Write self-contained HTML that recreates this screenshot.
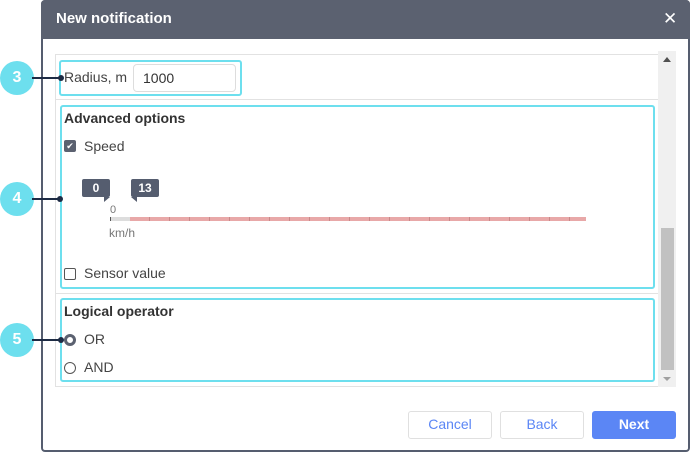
<!DOCTYPE html>
<html><head><style>
*{box-sizing:border-box;margin:0;padding:0}
body{width:690px;height:452px;background:#fff;font-family:"Liberation Sans",sans-serif;position:relative;overflow:hidden;color:#333}
.a{position:absolute}
.dlg{left:41px;top:0;width:649px;height:452px;border:2px solid #555d6f;border-radius:4px;background:#fff}
.hdr{left:41px;top:0;width:649px;height:39px;background:#5b6170;border-radius:4px 4px 0 0}
.cy{border:2px solid #6ddfee;border-radius:3px}
.num{width:34px;height:34px;border-radius:50%;background:#6ddfee;color:#fff;font-weight:bold;font-size:16px;text-align:center;line-height:34px}
.ln{height:2px;background:#1d2b44}
.dot{width:6px;height:6px;border-radius:50%;background:#1d2b44}
.t{font-size:14px;color:#444}
.b{font-size:14px;font-weight:bold;color:#333}
.btn{height:28px;border:1px solid #e0e0e0;border-radius:3px;color:#5b86f5;font-size:14px;text-align:center;line-height:26px}
.tip{background:#555d6f;color:#fff;font-size:12px;font-weight:bold;text-align:center;height:18px;line-height:18px;border-radius:2px}
</style></head><body>
<div class="a dlg"></div>
<div class="a hdr"></div>
<div class="a" style="left:56px;top:10px;color:#fff;font-size:15px;font-weight:bold">New notification</div>
<div class="a" style="left:663px;top:9px;color:#fff;font-size:17px">✕</div>
<!-- panel -->
<div class="a" style="left:55px;top:54px;width:604px;height:333px;border:1px solid #e2e2e2;border-right:none"></div>
<div class="a" style="left:56px;top:99px;width:602px;height:1px;background:#e2e2e2"></div>
<div class="a" style="left:56px;top:293px;width:602px;height:1px;background:#e2e2e2"></div>
<div class="a" style="left:658px;top:51px;width:18px;height:336px;background:#f0f0f0"></div>
<div class="a" style="left:661px;top:228px;width:13px;height:142px;background:#c1c1c1"></div>
<div class="a" style="left:663px;top:57px;width:0;height:0;border:4px solid transparent;border-bottom:5px solid #505050;border-top:none"></div>
<div class="a" style="left:663px;top:377px;width:0;height:0;border:4px solid transparent;border-top:4px solid #a0a0a0;border-bottom:none"></div>
<!-- radius -->
<div class="a cy" style="left:59px;top:60px;width:183px;height:36px"></div>
<div class="a t" style="left:64px;top:69px">Radius, m</div>
<div class="a" style="left:133px;top:64px;width:103px;height:28px;border:1px solid #ddd;border-radius:4px;padding-left:9px;line-height:26px;font-size:14px;color:#333">1000</div>
<!-- advanced -->
<div class="a cy" style="left:60px;top:105px;width:595px;height:184px"></div>
<div class="a b" style="left:64px;top:110px">Advanced options</div>
<div class="a" style="left:64px;top:140px;width:12px;height:12px;background:#5b6170;border-radius:2px;color:#fff;font-size:9px;line-height:12px;text-align:center">✔</div>
<div class="a t" style="left:84px;top:138px">Speed</div>
<div class="a tip" style="left:82px;top:179px;width:28px">0</div>
<div class="a" style="left:104px;top:197px;width:0;height:0;border-left:6px solid #555d6f;border-bottom:5px solid transparent"></div>
<div class="a tip" style="left:131px;top:179px;width:28px">13</div>
<div class="a" style="left:131px;top:197px;width:0;height:0;border-right:6px solid #555d6f;border-bottom:5px solid transparent"></div>
<div class="a" style="left:110px;top:204px;font-size:11px;color:#777">0</div>
<div class="a" style="left:110px;top:217px;width:20px;height:4px;background:#ddd;border-left:1px solid #555"></div>
<div class="a" style="left:130px;top:217px;width:456px;height:4px;background:repeating-linear-gradient(90deg,#e8a8a8 0 19px,#c98888 19px 20px)"></div>
<div class="a" style="left:109px;top:226px;font-size:12px;color:#777">km/h</div>
<div class="a" style="left:64px;top:268px;width:12px;height:12px;border:1px solid #555;border-radius:2px"></div>
<div class="a t" style="left:84px;top:265px">Sensor value</div>
<!-- logical -->
<div class="a cy" style="left:60px;top:298px;width:595px;height:84px"></div>
<div class="a b" style="left:64px;top:303px">Logical operator</div>
<div class="a" style="left:64px;top:334px;width:12px;height:12px;border:3px solid #5b6170;border-radius:50%"></div>
<div class="a t" style="left:84px;top:331px">OR</div>
<div class="a" style="left:64px;top:362px;width:12px;height:12px;border:1px solid #555;border-radius:50%"></div>
<div class="a t" style="left:84px;top:359px">AND</div>
<!-- callouts -->
<div class="a num" style="left:0;top:61px">3</div>
<div class="a ln" style="left:32px;top:77px;width:29px"></div>
<div class="a dot" style="left:58px;top:75px"></div>
<div class="a num" style="left:0;top:182px">4</div>
<div class="a ln" style="left:32px;top:198px;width:29px"></div>
<div class="a dot" style="left:57px;top:196px"></div>
<div class="a num" style="left:0;top:323px">5</div>
<div class="a ln" style="left:32px;top:339px;width:29px"></div>
<div class="a dot" style="left:58px;top:337px"></div>
<!-- buttons -->
<div class="a btn" style="left:408px;top:411px;width:84px;line-height:25px">Cancel</div>
<div class="a btn" style="left:500px;top:411px;width:84px;line-height:25px">Back</div>
<div class="a btn" style="left:592px;top:411px;width:84px;line-height:25px;background:#5b86f5;border-color:#5b86f5;color:#fff;font-weight:bold">Next</div>
</body></html>
